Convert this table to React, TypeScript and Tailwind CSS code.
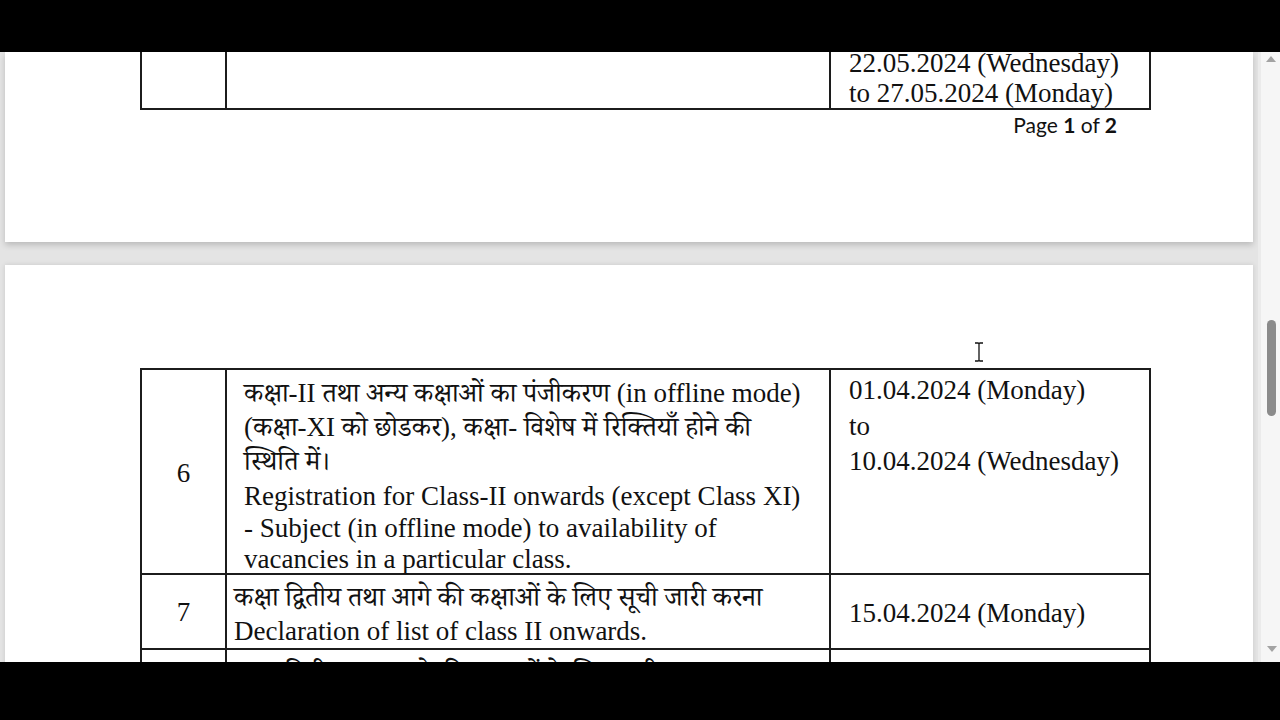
import React from "react";

const serif = { fontFamily: '"Liberation Serif", "Noto Serif Devanagari", "Noto Sans Devanagari", "Lohit Devanagari", "FreeSerif", serif' };

function Caret({ up }: { up?: boolean }) {
  return (
    <svg width="10" height="6" viewBox="0 0 10 6" className="block">
      {up ? <path d="M5 0 L10 6 L0 6 Z" fill="#a3a3a3" /> : <path d="M0 0 L10 0 L5 6 Z" fill="#a3a3a3" />}
    </svg>
  );
}

export default function App() {
  const cell = "border-2 border-[#1c1c1c]";
  return (
    <div className="w-[1280px] h-[720px] flex flex-col bg-black overflow-hidden" style={serif}>
      <div className="h-[52px] bg-black" />
      <div className="h-[610px] flex bg-[#e4e4e4]">
        {/* document area */}
        <div className="flex-1 overflow-hidden pl-[5px] relative">
          {/* page 1 (bottom part) */}
          <div className="w-[1248px] h-[190px] bg-white shadow-[0_3px_6px_rgba(0,0,0,0.18)] overflow-hidden">
            <table className="ml-[135px] border-collapse text-[27px] text-[#111] -mt-[2px]">
              <tbody>
                <tr className="h-[59px]">
                  <td className={`${cell} w-[85px] border-t-0`} />
                  <td className={`${cell} w-[604px] border-t-0`} />
                  <td className={`${cell} w-[320px] border-t-0 p-0 align-bottom`}>
                    <div className="h-[57px] overflow-hidden flex flex-col justify-end pl-[18px] leading-[30px]">
                      <div>22.05.2024 (Wednesday)</div>
                      <div>to 27.05.2024 (Monday)</div>
                    </div>
                  </td>
                </tr>
              </tbody>
            </table>
            <div className="w-[1112px] text-right text-[21px] text-[#111] leading-[28px] mt-[1px]" style={{ fontFamily: 'Lato, "Open Sans", sans-serif' }}>
              Page <b>1</b> of <b>2</b>
            </div>
          </div>

          {/* page 2 */}
          <div className="w-[1248px] h-[480px] mt-[23px] bg-white shadow-[0_0_5px_rgba(0,0,0,0.12)] pt-[103px]">
            <table className="ml-[135px] border-collapse text-[27px] text-[#111]">
              <tbody>
                <tr className="h-[205px]">
                  <td className={`${cell} w-[85px] text-center align-middle pt-[4px]`}>6</td>
                  <td className={`${cell} w-[604px] align-top p-0 whitespace-nowrap`}>
                    <div className="h-[196px] pl-[17px] pr-1 pt-[6px]">
                      <div className="leading-[34px]">
                        कक्षा-II तथा अन्य कक्षाओं का पंजीकरण (in offline mode)
                        <br />
                        (कक्षा-XI को छोडकर), कक्षा- विशेष में रिक्तियाँ होने की
                        <br />
                        स्थिति में।
                      </div>
                      <div className="leading-[31.5px] mt-[3px]">
                        Registration for Class-II onwards (except Class XI)
                        <br />
                        - Subject (in offline mode) to availability of
                        <br />
                        vacancies in a particular class.
                      </div>
                    </div>
                  </td>
                  <td className={`${cell} w-[320px] align-top pl-[18px] pt-[3px] leading-[35.5px]`}>
                    <div>01.04.2024 (Monday)</div>
                    <div>to</div>
                    <div>10.04.2024 (Wednesday)</div>
                  </td>
                </tr>
                <tr className="h-[74px]">
                  <td className={`${cell} text-center align-middle pt-[2px]`}>7</td>
                  <td className={`${cell} align-middle pl-[7px] pt-[5px] whitespace-nowrap`}>
                    <div className="leading-[35px]">कक्षा द्वितीय तथा आगे की कक्षाओं के लिए सूची जारी करना</div>
                    <div className="leading-[33px]">Declaration of list of class II onwards.</div>
                  </td>
                  <td className={`${cell} align-middle pl-[18px] pt-[3px]`}>15.04.2024 (Monday)</td>
                </tr>
                <tr className="h-[60px]">
                  <td className={cell} />
                  <td className={`${cell} align-top pl-[7px] pt-[6px] leading-[35px] whitespace-nowrap`}>
                    कक्षा द्वितीय तथा आगे की कक्षाओं के लिए सूची
                  </td>
                  <td className={cell} />
                </tr>
              </tbody>
            </table>
          </div>

          {/* text cursor */}
          <svg width="10" height="20" viewBox="0 0 10 20" className="absolute left-[974px] top-[290px]">
            <path d="M1 1 H4 Q5 1 5 2 V18 Q5 19 4 19 H1 M9 1 H6 Q5 1 5 2 M5 18 Q5 19 6 19 H9" stroke="#111" strokeWidth="1.3" fill="none" />
          </svg>
        </div>

        {/* scrollbar */}
        <div className="w-[22px] bg-[#f6f6f6] border-l-[3px] border-[#ebebeb] flex flex-col items-center">
          <div className="mt-[4px]">
            <Caret up />
          </div>
          <div className="flex-1 w-full flex flex-col items-center">
            <div className="mt-[258px] w-[9px] h-[96px] rounded-full bg-[#8b8b8b] ml-[2px]" />
          </div>
          <div className="mb-[10px] ml-[2px]">
            <Caret />
          </div>
        </div>
      </div>
      <div className="flex-1 bg-black" />
    </div>
  );
}
